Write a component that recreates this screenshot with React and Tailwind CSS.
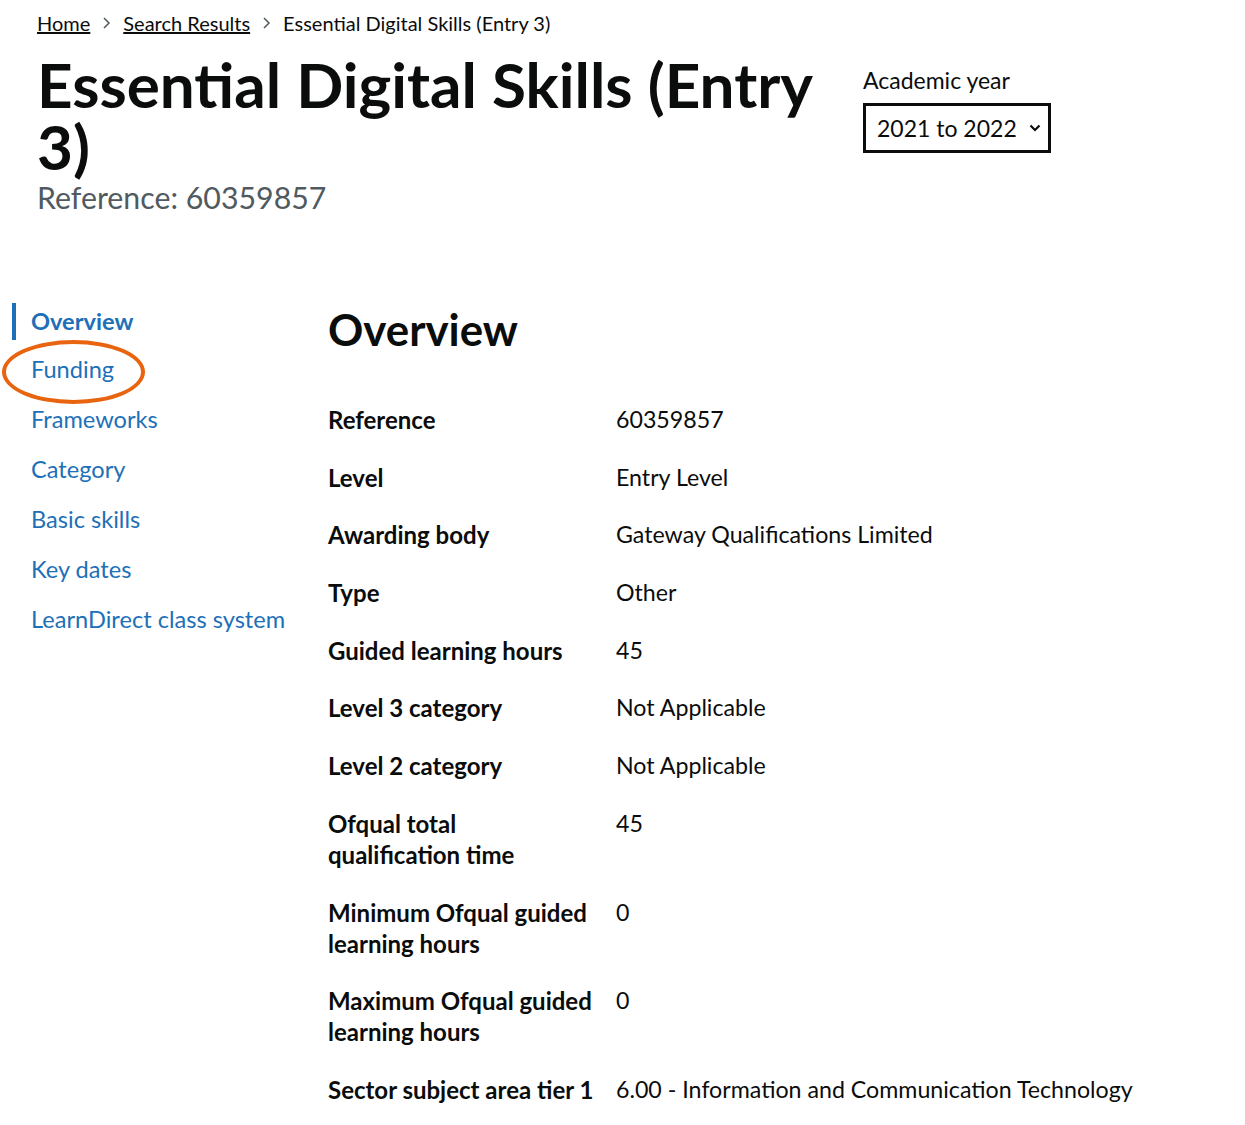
import React from 'react';

const NAV = [
  'Overview',
  'Funding',
  'Frameworks',
  'Category',
  'Basic skills',
  'Key dates',
  'LearnDirect class system',
];

// labels wrap where the reference wraps them
const ROWS = [
  ['Reference', '60359857'],
  ['Level', 'Entry Level'],
  ['Awarding body', 'Gateway Qualifications Limited'],
  ['Type', 'Other'],
  ['Guided learning hours', '45'],
  ['Level 3 category', 'Not Applicable'],
  ['Level 2 category', 'Not Applicable'],
  ['Ofqual total\nqualification time', '45'],
  ['Minimum Ofqual guided\nlearning hours', '0'],
  ['Maximum Ofqual guided\nlearning hours', '0'],
  ['Sector subject area tier 1', '6.00 - Information and Communication Technology'],
];

const Chevron = () => (
  <svg width="9" height="14" viewBox="0 0 9 14" className="mx-[12px] inline-block">
    <path d="M2 2l5 5-5 5" fill="none" stroke="#505a5f" strokeWidth="1.5" />
  </svg>
);

const App = () => {
  return (
    <div className="min-h-[1125px] w-full bg-white text-[#0b0c0c] font-['Lato',sans-serif]">
      <div className="pl-[37px] pt-[9px]">
        <nav className="text-[20px] leading-[28px] flex items-center">
          <a className="underline text-[#0b0c0c]">Home</a>
          <Chevron />
          <a className="underline text-[#0b0c0c]">Search Results</a>
          <Chevron />
          <span>Essential Digital Skills (Entry 3)</span>
        </nav>

        <div className="flex mt-[16px]">
          <div className="w-[826px]">
            <h1 className="w-[780px] text-[62px] leading-[62px] font-bold">
              Essential Digital Skills (Entry 3)
            </h1>
            <p className="text-[30.3px] leading-[36px] text-[#505a5f] mt-[2px]">Reference: 60359857</p>
          </div>
          <div className="pt-[12px]">
            <label className="block text-[23px] leading-[30px]">Academic year</label>
            <div className="mt-[8px] w-[188px] h-[50px] border-[3px] border-[#0b0c0c] flex items-center justify-between pl-[11px] pr-[7px]">
              <span className="text-[23px]">2021 to 2022</span>
              <svg width="12" height="8" viewBox="0 0 12 8">
                <path d="M1.5 1.5l4.5 4.5 4.5-4.5" fill="none" stroke="#0b0c0c" strokeWidth="2.2" />
              </svg>
            </div>
          </div>
        </div>
      </div>

      <div className="flex mt-[88px]">
        <aside className="w-[328px] pl-[12px] relative">
          <ul>
            {NAV.map((item, i) => (
              <li
                key={item}
                className={
                  i === 0
                    ? 'border-l-[4px] border-[#1d70b8] pl-[15px] py-[3px] mb-[11px] text-[23.6px] leading-[31px] font-bold text-[#1d70b8]'
                    : 'pl-[19px] py-[3px] mb-[13px] text-[23.6px] leading-[31px] text-[#1d70b8]'
                }
              >
                {item}
              </li>
            ))}
          </ul>
          <div className="absolute left-[2px] top-[37px] w-[143px] h-[64px] rounded-[50%] border-[4px] border-[#e8640f]" />
        </aside>

        <main className="flex-1">
          <h2 className="text-[43.8px] leading-[50px] font-bold mt-[1px]">Overview</h2>
          <dl className="mt-[50px]">
            {ROWS.map(([k, v]) => (
              <div key={k} className="grid grid-cols-[288px_1fr] pb-[26.7px]">
                <dt className="text-[24px] leading-[31px] font-bold pr-[20px] whitespace-pre-line">{k}</dt>
                <dd className="text-[23.2px] leading-[31px]">{v}</dd>
              </div>
            ))}
          </dl>
        </main>
      </div>
    </div>
  );
};

export default App;
